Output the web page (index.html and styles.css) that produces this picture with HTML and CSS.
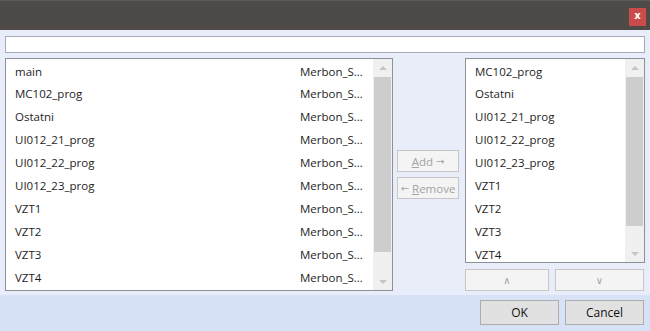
FILE: index.html
```html
<!DOCTYPE html>
<html>
<head>
<meta charset="utf-8">
<link rel="stylesheet" href="styles.css">
</head>
<body>
<div class="window">
  <div class="titlebar"><div class="close">x</div></div>
  <div class="content">
    <div class="search"></div>
    <div class="main">
      <div class="list left">
        <div class="rows">
          <div class="row"><span class="c1">main</span><span class="c2">Merbon_S…</span></div>
          <div class="row"><span class="c1">MC102_prog</span><span class="c2">Merbon_S…</span></div>
          <div class="row"><span class="c1">Ostatni</span><span class="c2">Merbon_S…</span></div>
          <div class="row"><span class="c1">UI012_21_prog</span><span class="c2">Merbon_S…</span></div>
          <div class="row"><span class="c1">UI012_22_prog</span><span class="c2">Merbon_S…</span></div>
          <div class="row"><span class="c1">UI012_23_prog</span><span class="c2">Merbon_S…</span></div>
          <div class="row"><span class="c1">VZT1</span><span class="c2">Merbon_S…</span></div>
          <div class="row"><span class="c1">VZT2</span><span class="c2">Merbon_S…</span></div>
          <div class="row"><span class="c1">VZT3</span><span class="c2">Merbon_S…</span></div>
          <div class="row"><span class="c1">VZT4</span><span class="c2">Merbon_S…</span></div>
        </div>
        <div class="scrollbar">
          <div class="arrow"><span class="tri up"></span></div>
          <div class="thumb thumb-left"></div>
          <div class="track-fill"></div>
          <div class="arrow"><span class="tri down"></span></div>
        </div>
      </div>
      <div class="mid">
        <div class="btn dis"><u>A</u>dd&nbsp;<span class="arr">→</span></div>
        <div class="btn dis"><span class="arr">←</span>&nbsp;<u>R</u>emove</div>
      </div>
      <div class="rightcol">
        <div class="list right">
          <div class="rows">
            <div class="row"><span class="c1">MC102_prog</span></div>
            <div class="row"><span class="c1">Ostatni</span></div>
            <div class="row"><span class="c1">UI012_21_prog</span></div>
            <div class="row"><span class="c1">UI012_22_prog</span></div>
            <div class="row"><span class="c1">UI012_23_prog</span></div>
            <div class="row"><span class="c1">VZT1</span></div>
            <div class="row"><span class="c1">VZT2</span></div>
            <div class="row"><span class="c1">VZT3</span></div>
            <div class="row"><span class="c1">VZT4</span></div>
          </div>
          <div class="scrollbar">
            <div class="arrow"><span class="tri up"></span></div>
            <div class="thumb thumb-right"></div>
            <div class="track-fill"></div>
            <div class="arrow"><span class="tri down"></span></div>
          </div>
        </div>
        <div class="updown">
          <div class="btn dis ud1">∧</div>
          <div class="btn dis ud2">∨</div>
        </div>
      </div>
    </div>
  </div>
  <div class="footer">
    <div class="btn norm">OK</div>
    <div class="btn norm">Cancel</div>
  </div>
</div>
</body>
</html>
```
FILE: styles.css
```css
html, body {
  margin: 0;
  padding: 0;
}
body {
  font-family: "Open Sans", "Noto Sans", sans-serif;
  font-size: 11.5px;
  color: #1e1e1e;
}
.window {
  width: 650px;
  height: 331px;
  background: #e9ecf9;
  display: flex;
  flex-direction: column;
  overflow: hidden;
}
.titlebar {
  height: 30px;
  background: #4d4a48;
  border-top: 1px solid #5d5a58;
  display: flex;
  justify-content: flex-end;
  align-items: flex-start;
  box-sizing: border-box;
}
.close {
  margin-top: 7px;
  margin-right: 4px;
  width: 17px;
  height: 18px;
  background: #c94b4b;
  color: #fff;
  font-weight: bold;
  font-size: 10px;
  line-height: 16px;
  text-align: center;
  font-family: "DejaVu Sans", sans-serif;
}
.content {
  padding: 6px 5px 0 5px;
  height: 265px;
  box-sizing: border-box;
}
.search {
  height: 17px;
  border: 1px solid #a6abb7;
  background: #fff;
  box-sizing: border-box;
}
.main {
  display: flex;
  margin-top: 5px;
}
.list {
  border: 1px solid #8b909a;
  background: #fff;
  display: flex;
  box-sizing: border-box;
  overflow: hidden;
}
.left {
  width: 388px;
  height: 233px;
}
.rows {
  flex: 1;
  padding-top: 1.5px;
  padding-left: 9px;
}
.row {
  height: 22.9px;
  line-height: 22.9px;
  display: flex;
  white-space: nowrap;
}
.left .c1 {
  width: 285px;
}
.scrollbar {
  width: 19px;
  background: #f0f0f0;
  display: flex;
  flex-direction: column;
  align-items: stretch;
}
.arrow {
  height: 17px;
  display: flex;
  align-items: center;
  justify-content: center;
}
.tri {
  width: 0;
  height: 0;
  border-left: 4px solid transparent;
  border-right: 4px solid transparent;
}
.tri.up {
  border-bottom: 4px solid #c5c5c5;
}
.tri.down {
  border-top: 4px solid #c5c5c5;
}
.thumb {
  background: #cdcdcd;
  margin: 1px 1px 0 1px;
}
.thumb-left {
  height: 175px;
}
.thumb-right {
  height: 149px;
}
.track-fill {
  flex: 1;
}
.mid {
  width: 72px;
  display: flex;
  flex-direction: column;
  padding-top: 92px;
  padding-left: 4px;
  box-sizing: border-box;
  gap: 5px;
}
.btn {
  box-sizing: border-box;
  display: flex;
  align-items: center;
  justify-content: center;
  white-space: nowrap;
}
.btn.dis {
  border: 1px solid #c6c6c6;
  background: #f4f4f4;
  color: #a2a2a2;
}
.arr {
  font-family: "DejaVu Sans", sans-serif;
  font-size: 10px;
}
.mid .btn {
  width: 62px;
  height: 22px;
}
.rightcol {
  width: 180px;
  display: flex;
  flex-direction: column;
}
.right {
  width: 180px;
  height: 205px;
}
.updown {
  display: flex;
  margin-top: 6px;
  gap: 6px;
}
.updown .btn {
  height: 22px;
  font-family: "DejaVu Sans", sans-serif;
  font-size: 10px;
}
.ud1 {
  width: 84px;
}
.ud2 {
  width: 89px;
}
.footer {
  flex: 1;
  background: #d8e2f6;
  display: flex;
  justify-content: flex-end;
  align-items: flex-start;
  padding: 5px 6px 0 0;
  gap: 6px;
}
.btn.norm {
  width: 79px;
  height: 25px;
  border: 1px solid #adadad;
  background: #e1e1e1;
  color: #111;
  font-size: 12px;
}
```
